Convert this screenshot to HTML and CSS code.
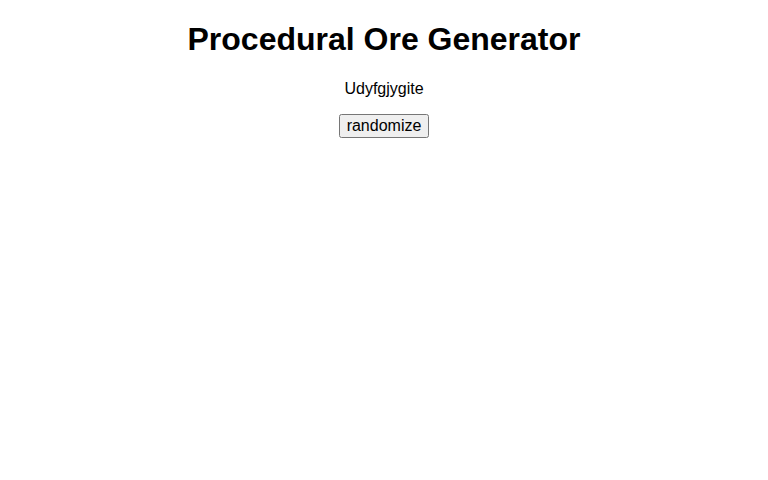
FILE: index.html
```html
<!DOCTYPE html>
<html lang="en">
<head>
    <meta charset="UTF-8">
    <meta name="viewport" content="width=device-width, initial-scale=1.0">
    <title>Procedural Ore Generator</title>
    <link rel="stylesheet" href="styles.css">
</head>
<body>
    <h1>Procedural Ore Generator</h1>
    <p id="ore-name" class="ore-name">Udyfgjygite</p>
    <button class="randomize-button">randomize</button>
</body>
</html>
```

FILE: styles.css
```css
body {
    font-family: 'Liberation Sans', Arial, sans-serif;
    margin: 0;
    text-align: center;
    color: #000000;
    background: #ffffff;
}
.randomize-button {
    font-family: 'Liberation Sans', Arial, sans-serif;
    font-size: 16px;
}
```
